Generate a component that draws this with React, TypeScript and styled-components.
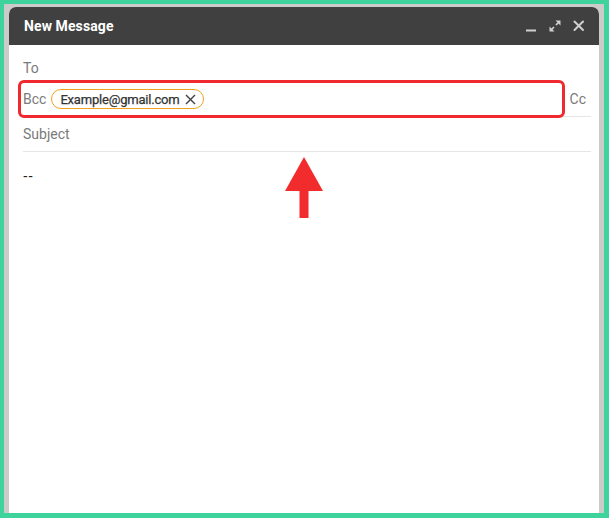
import React from 'react'
import styled, { createGlobalStyle } from 'styled-components';


/* Global */
const GlobalStyle = createGlobalStyle`
    html, body {
        margin: 0;
        padding: 0;
        background: #3ed39c;
    }
    * {
        box-sizing: border-box;
    }
`;


/* Styled Components */
const Frame = styled.div`
    width: 609px;
    height: 518px;
    padding: 4px 5px 5px 4px;
    background: #3ed39c;
    display: flex;
`;

    const Backdrop = styled.div`
        flex: 1;
        padding: 3px 5px 0 5px;
        background: #cbcbcb;
        display: flex;
    `;

        const Window = styled.div`
            flex: 1;
            background: #ffffff;
            border-radius: 7px 7px 0 0;
            overflow: hidden;
            display: flex;
            flex-flow: column nowrap;
            font-family: Roboto, "Liberation Sans", Arial, sans-serif;
        `;

            const Header = styled.div`
                height: 38px;
                padding: 0 13px 0 15px;
                background: #404040;
                display: flex;
                align-items: center;
                justify-content: space-between;
            `;

                const Title = styled.div`
                    color: #ffffff;
                    font-size: 14px;
                    font-weight: 700;
                    letter-spacing: 0.1px;
                `;

                const Controls = styled.div`
                    display: flex;
                    align-items: center;
                    gap: 10px;
                `;

                    const ControlIcon = styled.svg`
                        display: block;
                        width: 14px;
                        height: 14px;
                        color: #cfcfcf;
                    `;

            const Body = styled.div`
                position: relative;
                flex: 1;
                padding: 0 8px 0 14px;
                display: flex;
                flex-flow: column nowrap;
            `;

                const ToRow = styled.div`
                    height: 35px;
                    padding-bottom: 3px;
                    display: flex;
                    align-items: flex-end;
                `;

                const Label = styled.span`
                    color: #7a7a7a;
                    font-size: 14px;
                    line-height: 18px;
                `;

                const BccRow = styled.div`
                    height: 37px;
                    border-bottom: 1px solid #e6e6e6;
                    display: flex;
                    align-items: flex-start;
                    gap: 5px;
                `;

                    const Highlight = styled.div`
                        flex: 1;
                        height: 38px;
                        margin-left: -5px;
                        padding-left: 2px;
                        border: 3px solid #f0292e;
                        border-radius: 6px;
                        display: flex;
                        align-items: center;
                        gap: 5px;
                        position: relative;
                        z-index: 1;
                    `;

                        const Chip = styled.div`
                            height: 20px;
                            padding: 0 7px 0 8px;
                            border: 1px solid #f2a11f;
                            border-radius: 10px;
                            display: flex;
                            align-items: center;
                            gap: 6px;
                            color: #333333;
                            font-size: 13px;
                            font-weight: 400;
                            letter-spacing: -0.2px;
                            -webkit-text-stroke: 0.25px #333333;
                        `;

                            const ChipClose = styled.svg`
                                display: block;
                                width: 11px;
                                height: 11px;
                                color: #444444;
                            `;

                    const CcLabel = styled(Label)`
                        align-self: center;
                        margin-top: 1px;
                        padding-right: 5px;
                    `;

                const SubjectRow = styled.div`
                    height: 35px;
                    border-bottom: 1px solid #e6e6e6;
                    display: flex;
                    align-items: center;
                `;

                const Signature = styled.div`
                    padding-top: 15px;
                    color: #222222;
                    font-family: "Liberation Sans", Arial, sans-serif;
                    font-size: 14px;
                    line-height: 18px;
                    letter-spacing: 0.5px;
                `;

                const Arrow = styled.svg`
                    position: absolute;
                    left: 276px;
                    top: 112px;
                    width: 38px;
                    height: 61px;
                    color: #f22b2d;
                `;


/* React Component */
function App () {
    return (
        <Frame>
            <GlobalStyle />
            <Backdrop>
                <Window>
                    <Header>
                        <Title>New Message</Title>
                        <Controls>
                            <ControlIcon viewBox="0 0 14 14">
                                <rect x="2" y="10.5" width="10" height="2" fill="currentColor" />
                            </ControlIcon>
                            <ControlIcon viewBox="0 0 14 14">
                                <g stroke="currentColor" strokeWidth="1.7" fill="none">
                                    <line x1="8" y1="6" x2="11.5" y2="2.5" />
                                    <line x1="6" y1="8" x2="2.5" y2="11.5" />
                                </g>
                                <path d="M7.5 1.5 H12.5 V6.5 Z" fill="currentColor" />
                                <path d="M1.5 7.5 V12.5 H6.5 Z" fill="currentColor" />
                            </ControlIcon>
                            <ControlIcon viewBox="0 0 14 14">
                                <g stroke="currentColor" strokeWidth="2" strokeLinecap="round">
                                    <line x1="2.5" y1="2.5" x2="11" y2="11" />
                                    <line x1="11" y1="2.5" x2="2.5" y2="11" />
                                </g>
                            </ControlIcon>
                        </Controls>
                    </Header>

                    <Body>
                        <ToRow>
                            <Label>To</Label>
                        </ToRow>

                        <BccRow>
                            <Highlight>
                                <Label>Bcc</Label>
                                <Chip>
                                    Example@gmail.com
                                    <ChipClose viewBox="0 0 11 11">
                                        <g stroke="currentColor" strokeWidth="1.4">
                                            <line x1="1" y1="1" x2="10" y2="10" />
                                            <line x1="10" y1="1" x2="1" y2="10" />
                                        </g>
                                    </ChipClose>
                                </Chip>
                            </Highlight>
                            <CcLabel>Cc</CcLabel>
                        </BccRow>

                        <SubjectRow>
                            <Label>Subject</Label>
                        </SubjectRow>

                        <Signature>--</Signature>

                        <Arrow viewBox="0 0 38 61">
                            <polygon points="19,0 0,34 38,34" fill="currentColor" />
                            <rect x="14.5" y="33" width="9" height="28" fill="currentColor" />
                        </Arrow>
                    </Body>
                </Window>
            </Backdrop>
        </Frame>
    )
}


export default App;
